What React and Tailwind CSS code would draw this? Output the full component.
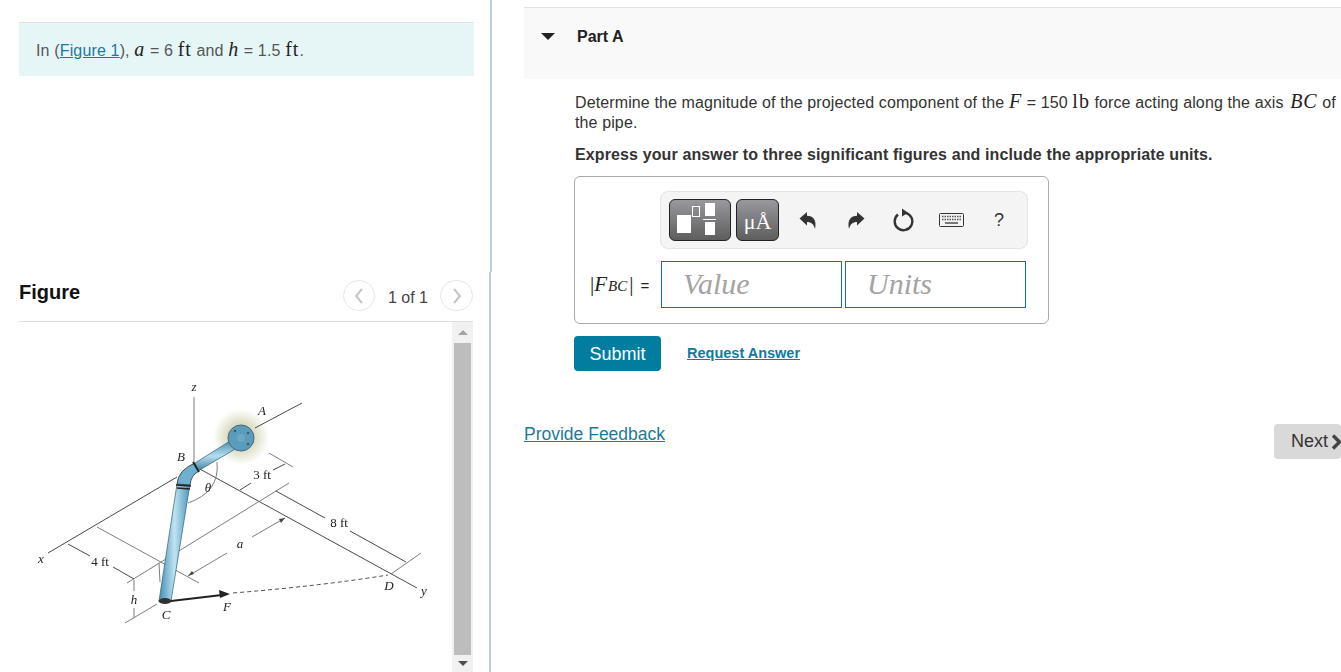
const serif = "font-['Liberation_Serif',serif]";

function MathVar({ children }) {
  return <span className={`${serif} text-[20px] italic leading-none tracking-[1px] text-[#222]`}>{children}</span>;
}

function MathUnit({ children }) {
  return <span className={`${serif} text-[20px] leading-none tracking-[1px] text-[#222]`}>{children}</span>;
}

function Chevron({ dir, color = "#c4c4c4" }) {
  const d = dir === "left" ? "M9 2 L3 9 L9 16" : "M3 2 L9 9 L3 16";
  return (
    <svg width="12" height="18" viewBox="0 0 12 18" fill="none">
      <path d={d} stroke={color} strokeWidth="2" />
    </svg>
  );
}

function PipeFigure() {
  const thin = "#7d7d7d";
  const dark = "#4a4a4a";
  const label = { fontFamily: "'Liberation Serif', serif", fontStyle: "italic", fontSize: 13, fill: "#222", textAnchor: "middle" };
  const dim = { fontFamily: "'Liberation Serif', serif", fontSize: 13, fill: "#222", textAnchor: "middle" };
  return (
    <svg className="block h-full w-full" viewBox="19 322 433 350">
      <defs>
        <radialGradient id="glow">
          <stop offset="0.4" stopColor="#d6d6bb" />
          <stop offset="1" stopColor="#ffffff" />
        </radialGradient>
        <linearGradient id="pipeV" x1="0" y1="0" x2="1" y2="0">
          <stop offset="0" stopColor="#3f8db5" />
          <stop offset="0.5" stopColor="#bfe3f1" />
          <stop offset="1" stopColor="#4b95bb" />
        </linearGradient>
        <linearGradient id="pipeH" x1="0" y1="0" x2="0" y2="1">
          <stop offset="0" stopColor="#4b8fb0" />
          <stop offset="0.5" stopColor="#b5deee" />
          <stop offset="1" stopColor="#3f7f9f" />
        </linearGradient>
        <filter id="soft">
          <feGaussianBlur stdDeviation="0.35" />
        </filter>
      </defs>
      <g filter="url(#soft)">
        <circle cx="241" cy="437" r="28" fill="url(#glow)" />
        <g stroke={thin} strokeWidth="1" fill="none">
          <path d="M194 397 V463" />
          <path d="M48 553 L177 477" stroke={dark} />
          <path d="M255 428 L302 403" stroke={dark} />
          <path d="M198 468 L417 588" stroke={dark} />
          <path d="M97 527 L199 583" />
          <path d="M127 583 L289 483" />
          <path d="M159 563 L160 582" />
          <path d="M188 576 L227 553" />
          <path d="M252 537 L285 518" />
          <path d="M125 623 L157 604" />
          <path d="M391 574 L421 553" />
          <path d="M269 453 L293 467" />
          <path d="M134 580 V591 M134 608 V618" />
          <path d="M217 462 Q220 492 188 503" />
          <path d="M68 544 L90 556 M113 567 L134 579" stroke={dark} />
          <path d="M276 491 L325 518 M350 531 L406 562" stroke={dark} />
          <path d="M273 470 L285 464 M240 490 L251 483" stroke={dark} />
          <path d="M233 593 Q320 586 388 575" strokeDasharray="4 3" stroke={dark} />
        </g>
        <path d="M177 484 L190 484 L171 601 L159 601 Z" fill="url(#pipeV)" stroke="#2f5f78" strokeWidth="0.7" />
        <path d="M177 484 Q178 470 195 463 L199 471 Q191 475 190 485 Z" fill="#6fb0cf" stroke="#333" strokeWidth="0.8" />
        <path d="M195 463 L230 441 L237 448 L198 471 Z" fill="url(#pipeH)" stroke="#2f5f78" strokeWidth="0.7" />
        <path d="M176 485 L191 486 M177 488 L190 489" stroke="#222" strokeWidth="1.3" />
        <path d="M193 462 L199 472" stroke="#222" strokeWidth="1.8" />
        <path d="M232 439 L238 449" stroke="#222" strokeWidth="1.8" />
        <circle cx="241" cy="438" r="13" fill="#5c9cbb" stroke="#47687a" strokeWidth="1" />
        <circle cx="235" cy="431" r="1.3" fill="#3b5f72" />
        <circle cx="248" cy="433" r="1.3" fill="#3b5f72" />
        <circle cx="248" cy="444" r="1.3" fill="#3b5f72" />
        <circle cx="241" cy="438" r="4" fill="#6aa8c4" />
        <ellipse cx="165" cy="601" rx="6.5" ry="3" fill="#333" />
        <path d="M171 601 L222 595" stroke="#222" strokeWidth="2" />
        <path d="M230 594 L219 590 L220 598 Z" fill="#222" />
        <path d="M188 576 L192 571 L194 574 Z" fill="#444" />
        <path d="M285 518 L279 519 L281 523 Z" fill="#444" />
        <text x="194" y="391" {...label}>z</text>
        <text x="262" y="415" {...label}>A</text>
        <text x="181" y="461" {...label}>B</text>
        <text x="208" y="492" {...label}>θ</text>
        <text x="240" y="548" {...label}>a</text>
        <text x="41" y="563" {...label}>x</text>
        <text x="134" y="604" {...label}>h</text>
        <text x="166" y="619" {...label}>C</text>
        <text x="227" y="611" {...label}>F</text>
        <text x="389" y="590" {...label}>D</text>
        <text x="424" y="595" {...label}>y</text>
        <text x="100" y="566" {...dim}>4 ft</text>
        <text x="262" y="479" {...dim}>3 ft</text>
        <text x="339" y="527" {...dim}>8 ft</text>
      </g>
    </svg>
  );
}

function Toolbar() {
  return (
    <div className="ml-[85px] flex h-[58px] w-[368px] items-center rounded-lg border border-[#e4e4e4] bg-[#f4f4f4] pl-2">
      <div className="relative h-[42px] w-[62px] rounded-md border border-[#222] bg-gradient-to-b from-[#9a989e] to-[#5e5e5e]">
        <span className="absolute left-[7px] top-[15px] h-[18px] w-[14px] bg-white" />
        <span className="absolute left-[22px] top-[6px] h-[11px] w-[8px] border border-white" />
        <span className="absolute left-[35px] top-[3px] h-[13px] w-[10px] bg-white" />
        <span className="absolute left-[33px] top-[19px] h-[1px] w-[13px] bg-white" />
        <span className="absolute left-[35px] top-[22px] h-[13px] w-[10px] bg-white" />
      </div>
      <div className={`${serif} ml-[5px] flex h-[42px] w-[43px] items-end justify-center rounded-md border border-[#222] bg-gradient-to-b from-[#9a989e] to-[#5e5e5e] pb-[7px] text-[22px] leading-none text-white`}>
        μÅ
      </div>
      <svg className="ml-[20px]" width="18" height="19" viewBox="0 0 18 19">
        <path d="M0.5 7.5 L8 1 V4.8 C14 4.8 18 9 16 18 C14.5 13 12.5 11 8 11 V14.5 Z" fill="#333" />
      </svg>
      <svg className="ml-[30px]" width="18" height="19" viewBox="0 0 18 19">
        <path d="M17.5 7.5 L10 1 V4.8 C4 4.8 0 9 2 18 C3.5 13 5.5 11 10 11 V14.5 Z" fill="#333" />
      </svg>
      <svg className="ml-[28px]" width="22" height="24" viewBox="0 0 22 24" fill="none">
        <path d="M12.5 4.8 A8.8 8.8 0 1 1 5 6.5" stroke="#333" strokeWidth="2.4" />
        <path d="M9 0.5 L15 4.8 L9 8.5 Z" fill="#333" />
      </svg>
      <svg className="ml-[24px]" width="26" height="16" viewBox="0 0 26 16" fill="none">
        <rect x="0.5" y="1.5" width="24" height="13" rx="1" stroke="#333" />
        <path d="M3 4.5 H22 M3 7.5 H22" stroke="#555" strokeWidth="1.4" strokeDasharray="1.5 1" />
        <path d="M6 11 H19" stroke="#444" strokeWidth="1.4" />
      </svg>
      <span className="ml-[29px] font-['Liberation_Sans',sans-serif] text-[18px] leading-none text-[#333]">?</span>
    </div>
  );
}

export default function App() {
  return (
    <div className="flex h-[672px] w-[1341px] overflow-hidden bg-white font-['Liberation_Sans',sans-serif] text-[16px] text-[#333]">
      <div className="w-[492px] shrink-0">
        <div className="h-[272px] w-[492px] border-r-2 border-[#bccfdd] pl-[19px] pt-[22px]">
          <div className="flex h-[54px] w-[455px] items-center border-t border-[#dfe1e3] bg-[#e6f6f7] pl-[17px] pt-[2px] text-[#555]">
            <span className="whitespace-pre tracking-[0.15px]">
              In (<a className="text-[#1a7a9c] underline">Figure 1</a>), <MathVar>a</MathVar> = 6 <MathUnit>ft</MathUnit> and <MathVar>h</MathVar> = 1.5 <MathUnit>ft</MathUnit>.
            </span>
          </div>
        </div>
        <div className="h-[400px] w-[491px] border-r-2 border-[#bccfdd] pl-[19px]">
          <div className="flex h-[50px] w-[454px] items-start border-b border-[#dedede] pt-[8px]">
            <h2 className="text-[20px] font-bold leading-[24px] text-[#111]">Figure</h2>
            <div className="ml-auto flex items-center">
              <button className="flex h-[31px] w-[32px] items-center justify-center rounded-full border border-[#e6e6e6]">
                <Chevron dir="left" />
              </button>
              <span className="ml-[13px] mr-[12px] pt-[5px] text-[#444]">1 of 1</span>
              <button className="flex h-[31px] w-[33px] items-center justify-center rounded-full border border-[#e6e6e6]">
                <Chevron dir="right" />
              </button>
            </div>
          </div>
          <div className="flex h-[350px] w-[454px]">
            <div className="min-w-0 flex-1">
              <PipeFigure />
            </div>
            <div className="flex w-[21px] flex-col items-center bg-[#f1f1f1]">
              <div className="flex h-[21px] items-center">
                <span className="h-0 w-0 border-x-[5px] border-b-[5px] border-x-transparent border-b-[#a3a3a3]" />
              </div>
              <div className="w-[17px] flex-1 bg-[#bdbdbd]" />
              <div className="flex h-[17px] items-center">
                <span className="h-0 w-0 border-x-[5px] border-t-[5px] border-x-transparent border-t-[#505050]" />
              </div>
            </div>
          </div>
        </div>
      </div>

      <div className="min-w-0 flex-1 pt-[7px]">
        <div className="ml-[32px] flex h-[72px] items-start border-t border-[#e2e2e2] bg-[#f9f9f9] pl-[17px] pt-[19px]">
          <span className="mt-[6px] h-0 w-0 border-x-[7px] border-t-[7px] border-x-transparent border-t-[#222]" />
          <h3 className="ml-[22px] text-[16px] font-bold leading-[20px] text-[#222]">Part A</h3>
        </div>

        <div className="ml-[82px]">
          <p className="ml-px mt-[12px] whitespace-nowrap leading-[20px] tracking-[0.12px]">
            Determine the magnitude of the projected component of the <MathVar>F</MathVar> = 150 <MathUnit>lb</MathUnit> force acting along the axis <span className="ml-[2px] tracking-[2px]"><MathVar>BC</MathVar></span> of
            <br />
            the pipe.
          </p>
          <p className="ml-px mt-[12px] font-bold leading-[20px] tracking-[0.12px]">Express your answer to three significant figures and include the appropriate units.</p>

          <div className="mt-[11px] h-[148px] w-[475px] rounded-md border border-[#ababab] pt-[14px]">
            <Toolbar />
            <div className="mt-[12px] flex items-center">
              <span className={`${serif} ml-[15px] w-[71px] whitespace-nowrap text-[21px] leading-none text-[#222]`}>
                |<span className="italic">F</span>
                <span className="ml-px text-[15px] italic">BC</span>
                <span className="ml-[2px]">|</span>
                <span className="ml-[7px] font-['Liberation_Sans',sans-serif] text-[15px]">=</span>
              </span>
              <div className={`${serif} h-[47px] w-[181px] border border-[#1a6f8b] pl-[21px] text-[30px] italic leading-[44px] text-[#a3a3a3]`}>Value</div>
              <div className={`${serif} ml-[3px] h-[47px] w-[181px] border border-[#1a6f8b] pl-[21px] text-[30px] italic leading-[44px] text-[#a3a3a3]`}>Units</div>
            </div>
          </div>

          <div className="mt-[12px] flex items-center">
            <button className="h-[35px] w-[87px] rounded-sm bg-[#027da0] text-[18px] leading-none text-white">Submit</button>
            <a className="ml-[26px] text-[14.5px] font-bold text-[#0f7ba0] underline">Request Answer</a>
          </div>
        </div>

        <div className="ml-[32px] mt-[53px] flex items-start justify-between">
          <a className="text-[17.5px] leading-[20px] text-[#1a7a9c] underline">Provide Feedback</a>
          <div className="flex h-[35px] w-[67px] items-center overflow-hidden rounded-sm bg-[#d9d9d9] pl-[17px] text-[18px] text-[#333]">
            Next
            <svg className="ml-[3px] shrink-0" width="11" height="16" viewBox="0 0 11 16" fill="none">
              <path d="M2 1.5 L8.5 8 L2 14.5" stroke="#444" strokeWidth="3.4" />
            </svg>
          </div>
        </div>
      </div>
    </div>
  );
}
